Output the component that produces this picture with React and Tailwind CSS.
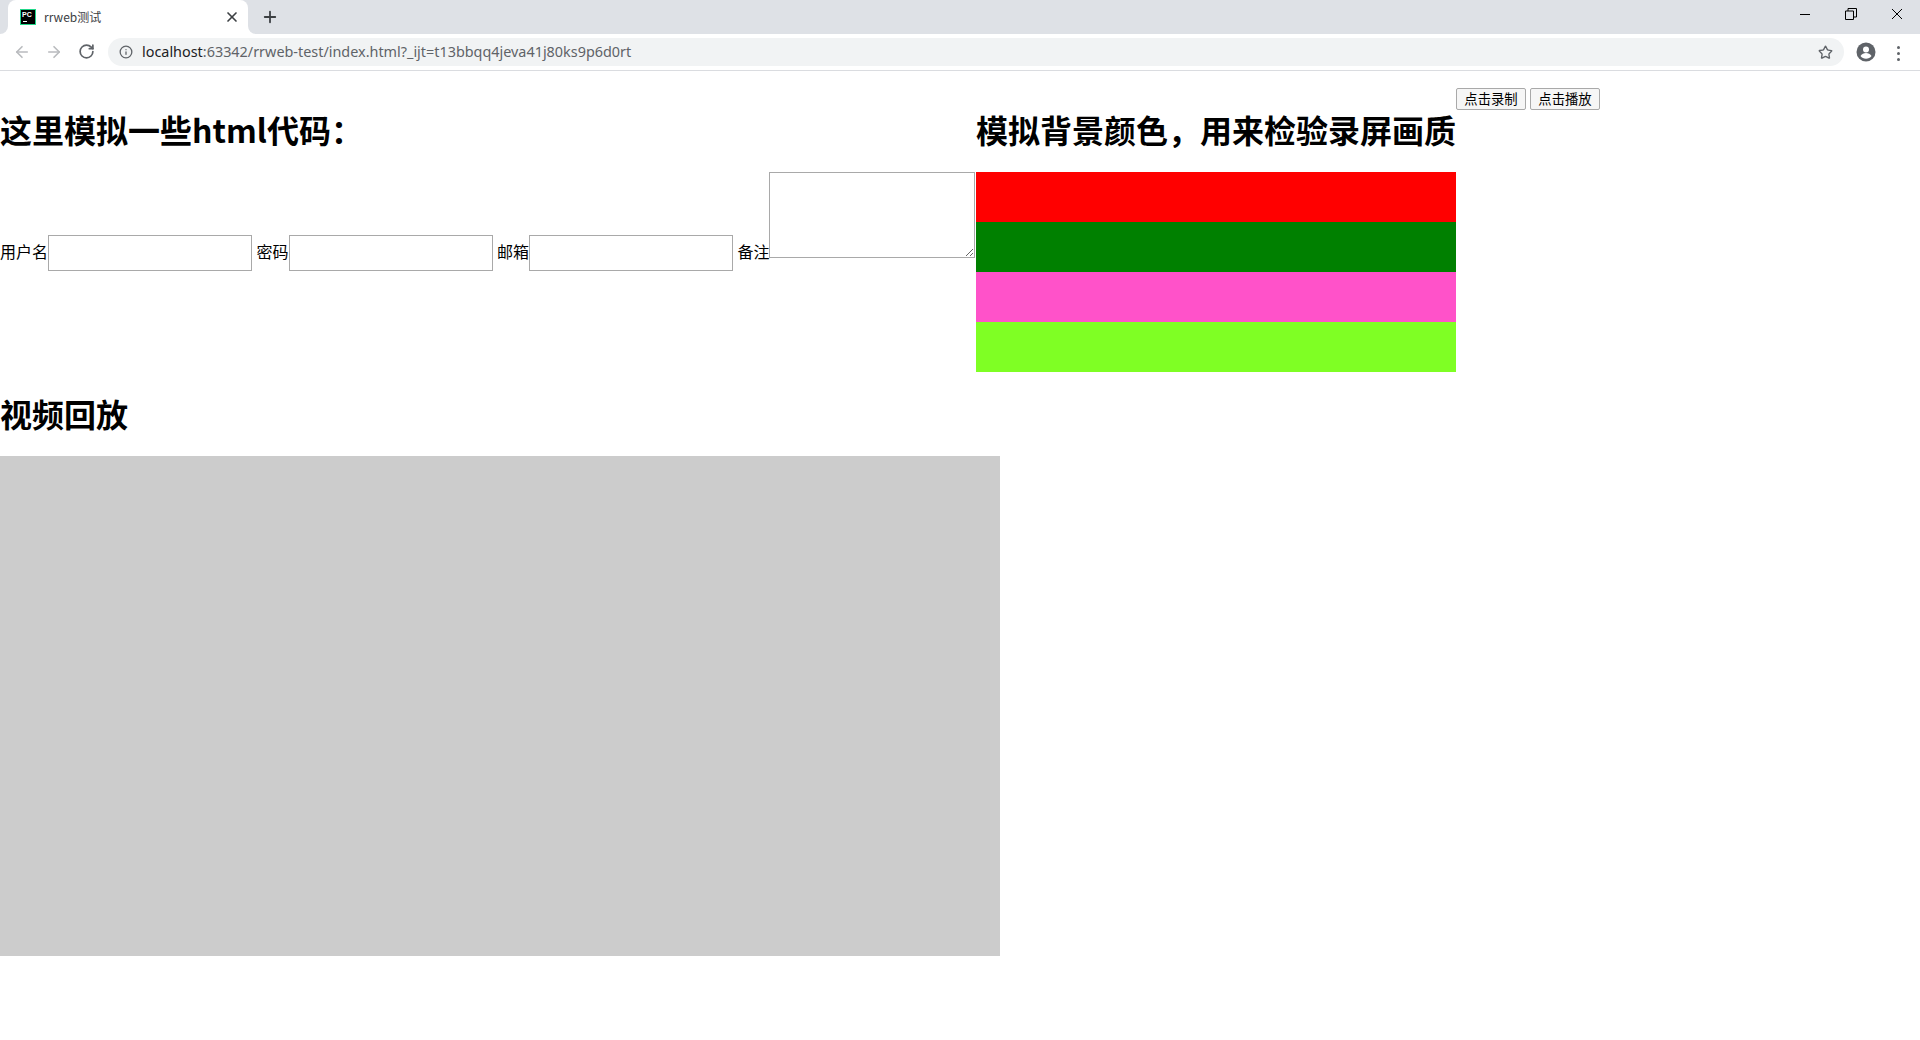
import { ArrowLeft, ArrowRight, Info, Plus, RotateCw, Star, X } from 'lucide-react';

const cjk = 'font-["Noto_Sans_CJK_SC","Noto_Sans",sans-serif]';

function TabFlare({ side }) {
  const pos = side === 'left' ? '-left-2' : '-right-2';
  const round = side === 'left' ? 'rounded-br-lg' : 'rounded-bl-lg';
  return (
    <span className={`absolute bottom-0 ${pos} w-2 h-2 bg-white`}>
      <span className={`block w-2 h-2 bg-[#dee1e6] ${round}`} />
    </span>
  );
}

function BrowserChrome() {
  return (
    <div className={`${cjk} shrink-0`}>
      <div className="h-[34px] bg-[#dee1e6] flex items-end">
        <div className="relative ml-2 w-[240px] h-[34px] mt-auto bg-white rounded-t-lg flex items-center">
          <TabFlare side="left" />
          <TabFlare side="right" />
          <div className="ml-3 w-4 h-4 bg-black border border-[#21d789] flex flex-col text-white">
            <span className="text-[7px] leading-[9px] font-bold pl-px font-['Liberation_Sans',sans-serif]">PC</span>
            <span className="ml-0.5 mt-0.5 w-1 h-px bg-white" />
          </div>
          <span className="ml-2 text-xs text-[#3c4043]">rrweb测试</span>
          <X className="ml-auto mr-2 w-4 h-4 text-[#3c4043]" strokeWidth={2.5} />
        </div>
        <Plus className="ml-[13px] mb-[8px] w-[18px] h-[18px] text-[#3c4043]" strokeWidth={2.4} />
        <div className="ml-auto self-start flex items-center h-7 text-black">
          <svg width="12" height="12" viewBox="0 0 12 12" className="mr-[34px]"><path d="M1 6.5h10" stroke="currentColor" /></svg>
          <svg width="12" height="12" viewBox="0 0 12 12" className="mr-[34px]">
            <path d="M.5 3h8v8.500h-8zM3 3V.5h8.500V9H8.500" fill="none" stroke="currentColor" />
          </svg>
          <svg width="12" height="12" viewBox="0 0 12 12" className="mr-[17px]"><path d="M1 1l10 10M11 1L1 11" stroke="currentColor" /></svg>
        </div>
      </div>
      <div className="h-[37px] border-b border-[#dadce0] bg-white flex items-start pt-1">
        <ArrowLeft className="ml-[13px] mt-[5px] w-[18px] h-[18px] text-[#b9bbbe]" strokeWidth={2.2} />
        <ArrowRight className="ml-[14px] mt-[5px] w-[18px] h-[18px] text-[#b9bbbe]" strokeWidth={2.2} />
        <RotateCw className="ml-[15px] mt-[5px] w-[17px] h-[17px] text-[#5f6368]" strokeWidth={2.4} />
        <div className="ml-[13px] w-[1736px] h-7 rounded-full bg-[#f1f3f4] flex items-center">
          <Info className="ml-[11px] w-[14px] h-[14px] text-[#5f6368]" strokeWidth={2.2} />
          <span className="ml-[9px] text-[14.400px] font-['Noto_Sans',sans-serif] text-[#202124]">
            localhost<span className="text-[#5f6368]">:63342/rrweb-test/index.html?_ijt=t13bbqq4jeva41j80ks9p6d0rt</span>
          </span>
          <Star className="ml-auto mr-[11px] w-[15px] h-[15px] text-[#5f6368]" strokeWidth={2.2} />
        </div>
        <svg width="20" height="20" viewBox="0 0 20 20" className="ml-[12px] mt-1 text-[#5f6368]">
          <circle cx="10" cy="10" r="9.500" fill="currentColor" />
          <circle cx="10" cy="7.500" r="3" fill="#fff" />
          <path d="M4.500 14c1-2 3.500-3 5.500-3s4.500 1 5.500 3c-1.300 1.700-3.300 2.700-5.500 2.700S5.800 15.700 4.500 14z" fill="#fff" />
        </svg>
        <div className="ml-[21px] mt-[8px] flex flex-col gap-[3px]">
          <span className="w-[3px] h-[3px] rounded-full bg-[#5f6368]" />
          <span className="w-[3px] h-[3px] rounded-full bg-[#5f6368]" />
          <span className="w-[3px] h-[3px] rounded-full bg-[#5f6368]" />
        </div>
      </div>
    </div>
  );
}

const inputClass = 'w-[204px] h-[36px] mr-[0.900px] border border-[#a9a9a9] bg-white text-[13.33px]';
const headingClass = 'text-[32px] leading-[48px] font-bold text-black whitespace-nowrap';
const buttonClass = 'w-[70px] h-[22px] border border-[#a9a9a9] rounded-[2px] bg-[#f6f6f6] text-[13.33px] leading-none text-black';

export default function App() {
  return (
    <div className={`${cjk} w-[1920px] h-[1040px] bg-white overflow-hidden`}>
      <BrowserChrome />
      <div className="flex items-start pt-[17px]">
        <div className="w-[976px] pt-[17px]">
          <h1 className={headingClass}>这里模拟一些html代码：</h1>
          <div className="mt-[19px] text-base whitespace-nowrap text-black">
            用户名<input className={inputClass} /> 密码<input className={inputClass} /> 邮箱<input className={inputClass} /> 备注<textarea className="w-[206px] h-[86px] border border-[#a9a9a9] bg-white text-[13.33px] resize" />
          </div>
        </div>
        <div className="w-[480px] pt-[17px]">
          <h1 className={headingClass}>模拟背景颜色，用来检验录屏画质</h1>
          <div className="mt-[19px]">
            <div className="h-[50px] bg-[#ff0000]" />
            <div className="h-[50px] bg-[#008000]" />
            <div className="h-[50px] bg-[#ff52c9]" />
            <div className="h-[50px] bg-[#7fff24]" />
          </div>
        </div>
        <div className="flex gap-1">
          <button className={buttonClass}>点击录制</button>
          <button className={buttonClass}>点击播放</button>
        </div>
      </div>
      <h1 className={`${headingClass} mt-[17px]`}>视频回放</h1>
      <div className="mt-[19px] w-[1000px] h-[500px] bg-[#cccccc]" />
    </div>
  );
}
